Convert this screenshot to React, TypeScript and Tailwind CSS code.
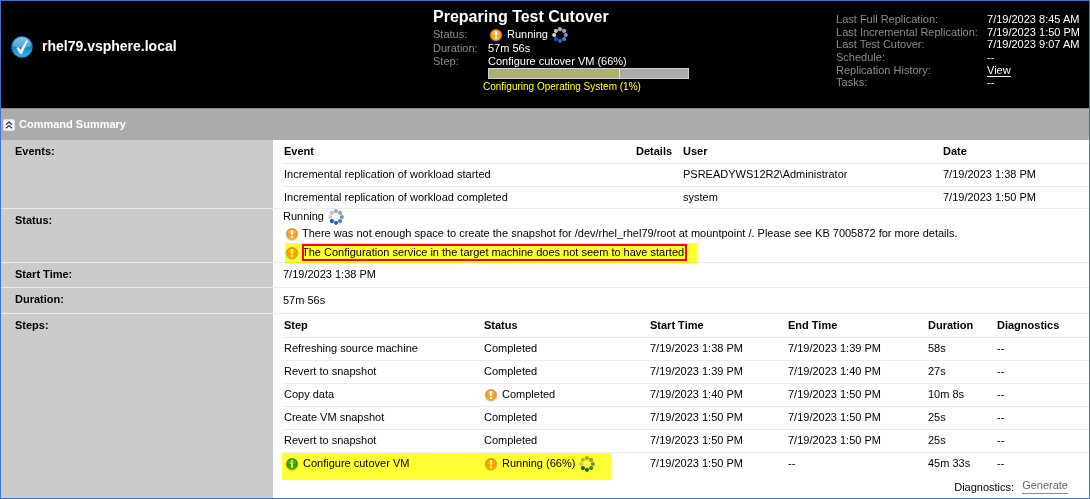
import React, { useId } from 'react';

type IconName = 'warning' | 'info';

const replication = [
  { label: 'Last Full Replication:', value: '7/19/2023 8:45 AM' },
  { label: 'Last Incremental Replication:', value: '7/19/2023 1:50 PM' },
  { label: 'Last Test Cutover:', value: '7/19/2023 9:07 AM' },
  { label: 'Schedule:', value: '--' },
  { label: 'Replication History:', value: 'View', link: true },
  { label: 'Tasks:', value: '--' },
];

const events = [
  { event: 'Incremental replication of workload started', user: 'PSREADYWS12R2\\Administrator', date: '7/19/2023 1:38 PM' },
  { event: 'Incremental replication of workload completed', user: 'system', date: '7/19/2023 1:50 PM' },
];

const steps: {
  name: string;
  status: string;
  start: string;
  end: string;
  duration: string;
  nameIcon?: IconName;
  statusIcon?: IconName;
  active?: boolean;
}[] = [
  { name: 'Refreshing source machine', status: 'Completed', start: '7/19/2023 1:38 PM', end: '7/19/2023 1:39 PM', duration: '58s' },
  { name: 'Revert to snapshot', status: 'Completed', start: '7/19/2023 1:39 PM', end: '7/19/2023 1:40 PM', duration: '27s' },
  { name: 'Copy data', status: 'Completed', start: '7/19/2023 1:40 PM', end: '7/19/2023 1:50 PM', duration: '10m 8s', statusIcon: 'warning' },
  { name: 'Create VM snapshot', status: 'Completed', start: '7/19/2023 1:50 PM', end: '7/19/2023 1:50 PM', duration: '25s' },
  { name: 'Revert to snapshot', status: 'Completed', start: '7/19/2023 1:50 PM', end: '7/19/2023 1:50 PM', duration: '25s' },
  { name: 'Configure cutover VM', status: 'Running (66%)', start: '7/19/2023 1:50 PM', end: '--', duration: '45m 33s', nameIcon: 'info', statusIcon: 'warning', active: true },
];

function Badge({ name }: { name: IconName }) {
  const id = useId();
  const warning = name === 'warning';
  return (
    <svg viewBox="0 0 14 14" className="w-[14px] h-[14px] shrink-0">
      <defs>
        <radialGradient id={id} cx="0.5" cy="0.75" r="0.7">
          <stop offset="0" stopColor={warning ? '#ffb629' : '#4cb843'} />
          <stop offset="1" stopColor={warning ? '#e8860c' : '#15803a'} />
        </radialGradient>
      </defs>
      <circle cx="7" cy="7.4" r="6.4" fill="#9a9a9a" opacity="0.45" />
      <circle cx="7" cy="7" r="5.7" fill={`url(#${id})`} />
      <path d="M2.5 6.2a4.6 4.6 0 0 1 9 0q-4.500 1.500-9 0z" fill="#fff" opacity="0.25" />
      {warning ? (
        <>
          <path d="M5.800 3h2.400l-.4 5h-1.600z" fill="#fff" />
          <circle cx="7" cy="9.900" r="1.100" fill="#fff" />
        </>
      ) : (
        <>
          <circle cx="7" cy="3.800" r="1.100" fill="#fff" />
          <path d="M5.200 5.500h2.700v5.200h-1.800v-3.900h-.9z" fill="#fff" />
        </>
      )}
    </svg>
  );
}

// Ring of dots fading out behind the leading one at the bottom left
const dots = [
  { x: 8, y: 2.2, color: '#a9adb5' },
  { x: 12.1, y: 3.9, color: '#90a5cb' },
  { x: 13.8, y: 8, color: '#7795cd' },
  { x: 12.1, y: 12.1, color: '#5379c1' },
  { x: 8, y: 13.8, color: '#2b62c9' },
  { x: 3.9, y: 12.1, color: '#1254cf' },
  { x: 2.2, y: 8, color: '#cfd2d8' },
  { x: 3.9, y: 3.9, color: '#bcc0c8' },
];

function Spinner() {
  return (
    <svg viewBox="0 0 16 16" className="w-4 h-4 shrink-0">
      {dots.map(d => (
        <circle key={`${d.x}-${d.y}`} cx={d.x} cy={d.y} r="2.100" fill={d.color} />
      ))}
    </svg>
  );
}

function CheckIcon() {
  return (
    <svg viewBox="0 0 22 22" className="w-[22px] h-[22px] shrink-0">
      <defs>
        <linearGradient id="check-fill" x1="0" y1="0" x2="0" y2="1">
          <stop offset="0" stopColor="#5aaee6" />
          <stop offset="0.5" stopColor="#1a86cd" />
          <stop offset="1" stopColor="#35b4ee" />
        </linearGradient>
      </defs>
      <circle cx="11" cy="11" r="10.500" fill="url(#check-fill)" stroke="#1a6fae" strokeWidth="0.6" />
      <path d="M2 10a9 9 0 0 1 18 0q-9 3.500-18 0z" fill="#fff" opacity="0.25" />
      <path d="M5.500 12.300l1.900-1.200 2.300 3.200 5.300-9.800 2 .3-6.300 13.200h-1.600z" fill="#fff" />
    </svg>
  );
}

function CollapseIcon() {
  return (
    <svg viewBox="0 0 12 12" className="w-3 h-3">
      <rect x="0.500" y="0.500" width="11" height="11" rx="1.500" fill="#f4f7fb" stroke="#d7e0ea" />
      <path d="M3 5.700l3-2.700 3 2.700M3 9.300l3-2.700 3 2.700" fill="none" stroke="#3c4654" strokeWidth="1.400" />
    </svg>
  );
}

function Row({ label, children }: { label: string; children: React.ReactNode }) {
  return (
    <section className="flex border-b border-[#ececec] last:border-b-0 last:grow">
      <h3 className="w-[272px] shrink-0 bg-[#cbcbcb] pl-[14px] pt-[3px] font-bold leading-4">{label}</h3>
      <div className="flex-1 min-w-0 pl-[10px]">{children}</div>
    </section>
  );
}

const rowClass = 'h-[23px] border-b border-[#ececec]';

export default function App() {
  return (
    <div className="min-h-screen flex flex-col border border-[#4472c4] bg-white text-black text-[11px] leading-[13px] font-['Liberation_Sans',Arial,sans-serif]">
      <header className="flex bg-black text-white border-b border-[#8c8c8c] h-[108px]">
        <div className="w-[432px] shrink-0 flex items-start gap-[9px] pl-[10px] pt-[35px]">
          <CheckIcon />
          <h1 className="text-[14px] leading-[20px] font-bold">rhel79.vsphere.local</h1>
        </div>

        <div className="flex-1 pt-[6px]">
          <h2 className="text-base leading-5 font-bold">Preparing Test Cutover</h2>
          <dl className="grid grid-cols-[55px_1fr]">
            <dt className="text-[#8c8c8c] leading-[15px]">Status:</dt>
            <dd className="flex items-center h-[15px] gap-1 pl-px">
              <Badge name="warning" />
              <span>Running</span>
              <Spinner />
            </dd>
            <dt className="text-[#8c8c8c]">Duration:</dt>
            <dd>57m 56s</dd>
            <dt className="text-[#8c8c8c]">Step:</dt>
            <dd>Configure cutover VM (66%)</dd>
          </dl>
          <div className="ml-[55px] w-[201px] h-[11px] border border-[#d0d0d0] bg-[#ababab]">
            <div className="w-[66%] h-full bg-[#adb072] border-r border-[#e6e6d0]" />
          </div>
          <p className="pl-[50px] pt-[1px] text-[10px] text-[#ffff33]">Configuring Operating System (1%)</p>
        </div>

        <dl className="grid grid-cols-[151px_1fr] grid-rows-6 h-[76px] mt-3 pr-[9px] shrink-0">
          {replication.map(r => (
            <React.Fragment key={r.label}>
              <dt className="text-[#8c8c8c]">{r.label}</dt>
              <dd>{r.link ? <a href="#history" className="border-b border-white">{r.value}</a> : r.value}</dd>
            </React.Fragment>
          ))}
        </dl>
      </header>

      <div className="flex items-center gap-1 h-[31px] pl-[2px] bg-[#ababab] text-white">
        <button type="button" aria-label="Collapse Command Summary">
          <CollapseIcon />
        </button>
        <h2 className="font-bold">Command Summary</h2>
      </div>

      <Row label="Events:">
        <table className="w-full table-fixed text-left">
          <thead>
            <tr className={rowClass}>
              <th className="w-[352px] pl-px">Event</th>
              <th className="w-[47px] pl-px">Details</th>
              <th className="w-[260px] pl-px">User</th>
              <th className="pl-px">Date</th>
            </tr>
          </thead>
          <tbody>
            {events.map(e => (
              <tr key={e.event} className="h-[23px] border-b border-[#ececec] last:border-b-0 last:h-[22px]">
                <td className="pl-px">{e.event}</td>
                <td />
                <td className="pl-px">{e.user}</td>
                <td className="pl-px">{e.date}</td>
              </tr>
            ))}
          </tbody>
        </table>
      </Row>

      <Row label="Status:">
        <div className="flex items-center gap-1 h-[15px]">
          <span>Running</span>
          <Spinner />
        </div>
        <div className="flex items-center gap-[3px] h-[19px] pl-[2px]">
          <Badge name="warning" />
          <span>There was not enough space to create the snapshot for /dev/rhel_rhel79/root at mountpoint /. Please see KB 7005872 for more details.</span>
        </div>
        <div className="relative flex items-center gap-[3px] h-[19px] pl-[2px]">
          <Badge name="warning" />
          <span className="relative">
            The Configuration service in the target machine does not seem to have started
            <span className="absolute left-0 -right-[3px] -inset-y-[2px] border-2 border-[#ff0000]" />
          </span>
          <div className="absolute left-[2px] top-0 w-[412px] h-[21px] bg-[#ffff33] mix-blend-multiply pointer-events-none" />
        </div>
      </Row>

      <Row label="Start Time:">
        <p className="pt-[5px] pb-[6px]">7/19/2023 1:38 PM</p>
      </Row>

      <Row label="Duration:">
        <p className="py-[6px]">57m 56s</p>
      </Row>

      <Row label="Steps:">
        <table className="w-full table-fixed text-left">
          <thead>
            <tr className={rowClass}>
              <th className="w-[200px] pl-px">Step</th>
              <th className="w-[166px] pl-px">Status</th>
              <th className="w-[138px] pl-px">Start Time</th>
              <th className="w-[140px] pl-px">End Time</th>
              <th className="w-[69px] pl-px">Duration</th>
              <th className="pl-px">Diagnostics</th>
            </tr>
          </thead>
          <tbody>
            {steps.map((s, i) => (
              <tr key={i} className="h-[23px] border-b border-[#ececec] last:border-b-0">
                <td className="pl-px relative">
                  <div className={s.nameIcon ? 'flex items-center gap-1 pl-px' : ''}>
                    {s.nameIcon && <Badge name={s.nameIcon} />}
                    <span>{s.name}</span>
                  </div>
                  {s.active && (
                    <div className="absolute z-10 -left-px top-0 w-[329px] h-[27px] bg-[#ffff33] mix-blend-multiply pointer-events-none" />
                  )}
                </td>
                <td className="pl-px">
                  <div className="flex items-center gap-1">
                    {s.statusIcon && <Badge name={s.statusIcon} />}
                    <span>{s.status}</span>
                    {s.active && <Spinner />}
                  </div>
                </td>
                <td className="pl-px">{s.start}</td>
                <td className="pl-px">{s.end}</td>
                <td className="pl-px">{s.duration}</td>
                <td className="pl-px">--</td>
              </tr>
            ))}
          </tbody>
        </table>
        <div className="flex justify-end gap-2 pt-1 pr-[21px]">
          <span className="pt-[2px]">Diagnostics:</span>
          <a href="#generate" className="text-[#666] border-b border-[#888]">Generate</a>
        </div>
      </Row>
    </div>
  );
}
